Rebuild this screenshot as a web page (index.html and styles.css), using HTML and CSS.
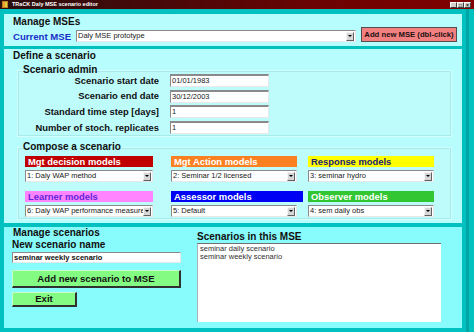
FILE: index.html
```html
<!DOCTYPE html>
<html>
<head>
<meta charset="utf-8">
<link rel="stylesheet" href="styles.css">
</head>
<body>
<div class="window">
  <div class="titlebar">
    <span class="app-icon"></span>
    <span class="title">TRaCK Daly MSE scenario editor</span>
    <div class="controls">
      <span class="ctl">_</span><span class="ctl">□</span><span class="ctl">×</span>
    </div>
  </div>
  <div class="frame">
    <section class="panel mses">
      <h2 class="ptitle">Manage MSEs</h2>
      <div class="mse-row">
        <span class="current-label">Current MSE</span>
        <div class="combo mse-combo"><span class="combo-text">Daly MSE prototype</span><span class="arrow"></span></div>
        <div class="btn-add-mse">Add new MSE (dbl-click)</div>
      </div>
    </section>
    <section class="panel define">
      <h2 class="ptitle">Define a scenario</h2>
      <fieldset class="group admin">
        <legend>Scenario admin</legend>
        <div class="admin-grid">
          <span class="flabel">Scenario start date</span><div class="field">01/01/1983</div>
          <span class="flabel">Scenario end date</span><div class="field">30/12/2003</div>
          <span class="flabel">Standard time step [days]</span><div class="field">1</div>
          <span class="flabel">Number of stoch. replicates</span><div class="field">1</div>
        </div>
      </fieldset>
      <fieldset class="group compose">
        <legend>Compose a scenario</legend>
        <div class="models">
          <div class="model c1"><div class="mhead red">Mgt decision models</div><div class="combo"><span class="combo-text">1: Daly WAP method</span><span class="arrow"></span></div></div>
          <div class="model c2"><div class="mhead orange">Mgt Action models</div><div class="combo"><span class="combo-text">2: Seminar 1/2 licensed</span><span class="arrow"></span></div></div>
          <div class="model c3"><div class="mhead yellow">Response models</div><div class="combo"><span class="combo-text">3: seminar hydro</span><span class="arrow"></span></div></div>
          <div class="model c1"><div class="mhead pink">Learner models</div><div class="combo"><span class="combo-text">6: Daly WAP performance measure</span><span class="arrow"></span></div></div>
          <div class="model c2"><div class="mhead blue">Assessor models</div><div class="combo"><span class="combo-text">5: Default</span><span class="arrow"></span></div></div>
          <div class="model c3"><div class="mhead green">Observer models</div><div class="combo"><span class="combo-text">4: sem daily obs</span><span class="arrow"></span></div></div>
        </div>
      </fieldset>
    </section>
    <section class="panel scen">
      <div class="scen-left">
        <h2 class="ptitle ms-title">Manage scenarios</h2>
        <div class="ptitle">New scenario name</div>
        <div class="field name-field">seminar weekly scenario</div>
        <div class="gbtn add-btn">Add new scenario to MSE</div>
        <div class="gbtn exit-btn">Exit</div>
      </div>
      <div class="scen-right">
        <div class="ptitle">Scenarios in this MSE</div>
        <div class="listbox">
          <div class="item">seminar daily scenario</div>
          <div class="item">seminar weekly scenario</div>
        </div>
      </div>
    </section>
  </div>
</div>
</body>
</html>
```

FILE: styles.css
```css
* { box-sizing: border-box; }
body {
  margin: 0;
  font-family: "Liberation Sans", Arial, sans-serif;
  color: #101010;
}
.window {
  width: 474px;
  height: 332px;
  display: flex;
  flex-direction: column;
  overflow: hidden;
  background: #00c0c0;
}
.titlebar {
  height: 9px;
  flex: none;
  display: flex;
  align-items: center;
  background: linear-gradient(90deg, #2a0e0e 0%, #4a0808 35%, #6e0202 70%, #800000 100%);
  color: #fff;
}
.app-icon {
  width: 6px;
  height: 7px;
  margin-left: 2px;
  background: linear-gradient(90deg, #f0a030 50%, #d8d040 50%);
  border: 1px solid #c08020;
}
.title {
  margin-left: 4px;
  font-size: 5.5px;
  font-weight: bold;
  line-height: 9px;
  white-space: nowrap;
}
.controls {
  margin-left: auto;
  margin-right: 3px;
  display: flex;
}
.ctl {
  width: 7px;
  height: 6px;
  background: #d4d0c8;
  border: 1px solid;
  border-color: #fff #404040 #404040 #fff;
  color: #000;
  font-size: 5px;
  line-height: 4px;
  text-align: center;
  font-weight: bold;
}
.frame {
  flex: 1;
  display: flex;
  flex-direction: column;
  padding: 5px 12px 4px 4px;
  background: linear-gradient(90deg, #00c0c0 466px, #00a6a6 466px, #00a6a6 469px, #00c0c0 469px);
}
.panel {
  background: #b8fdfd;
}
.ptitle {
  margin: 0;
  font-size: 10px;
  font-weight: bold;
  line-height: 12px;
  color: #101010;
  white-space: nowrap;
}
/* Panel 1 */
.mses {
  height: 32px;
  padding: 2px 0 0 9px;
}
.mse-row {
  margin-top: -1px;
  height: 15px;
  display: flex;
  align-items: flex-end;
}
.current-label {
  width: 63px;
  font-size: 9.6px;
  font-weight: bold;
  line-height: 11px;
  color: #1a2ec8;
  white-space: nowrap;
}
.combo {
  height: 12px;
  background: #fff;
  border: 1px solid;
  border-color: #8a8a8a #e8e8e8 #e8e8e8 #8a8a8a;
  display: flex;
  align-items: center;
  overflow: hidden;
}
.combo-text {
  flex: 1;
  min-width: 0;
  font-size: 7.5px;
  line-height: 10px;
  padding-left: 1px;
  white-space: nowrap;
  overflow: hidden;
  color: #202020;
}
.arrow {
  flex: none;
  width: 8px;
  height: 9px;
  margin-right: 1px;
  background: #d6d6d6;
  border: 1px solid;
  border-color: #f4f4f4 #606060 #606060 #f4f4f4;
  display: flex;
  align-items: center;
  justify-content: center;
}
.arrow::after {
  content: "";
  border-left: 2px solid transparent;
  border-right: 2px solid transparent;
  border-top: 2px solid #000;
}
.mse-combo {
  width: 280px;
}
.btn-add-mse {
  margin-left: 5px;
  width: 96px;
  height: 15px;
  background: #f28080;
  border: 1px solid;
  border-color: #ffd0d0 #303030 #303030 #ffd0d0;
  outline: 1px solid #505050;
  outline-offset: -1px;
  font-size: 7.7px;
  font-weight: bold;
  line-height: 13px;
  text-align: center;
  white-space: nowrap;
  color: #201010;
}
/* Panel 2 */
.define {
  margin-top: 3px;
  height: 174px;
  padding: 1px 10px 3px 9px;
}
.group {
  margin: 0 0 0 4px;
  border: 1px solid #d4ffff;
  box-shadow: inset 0 0 0 1px #a6eaea;
  background: #befcfc;
  min-width: 0;
}
.group legend {
  padding: 0;
  font-size: 10px;
  font-weight: bold;
  line-height: 12px;
  color: #101010;
  white-space: nowrap;
}
.admin {
  margin-top: 2px;
  padding: 0 0 2px 5px;
}
.admin-grid {
  margin-top: -2px;
  display: grid;
  grid-template-columns: 136px 99px;
  grid-auto-rows: 13px;
  column-gap: 11px;
  row-gap: 2.7px;
  align-items: center;
}
.flabel {
  text-align: right;
  font-size: 9.4px;
  font-weight: bold;
  line-height: 12px;
  white-space: nowrap;
}
.field {
  height: 13px;
  background: #fff;
  border: 1px solid;
  border-top-width: 2px;
  border-color: #8a8a8a #e8e8e8 #e8e8e8 #8a8a8a;
  font-size: 7.5px;
  line-height: 10px;
  padding-left: 1px;
  color: #202020;
  white-space: nowrap;
}
.compose {
  margin-top: 4px;
  padding: 3px 0 2px 5px;
}
.models {
  margin-left: 2px;
  display: grid;
  grid-template-columns: 128px 144px 137px;
  row-gap: 9px;
}
.model .combo {
  margin-top: 3px;
  width: 100%;
}
.c2 { padding-left: 18px; }
.c3 { padding-left: 11px; }
.mhead {
  height: 11px;
  font-size: 9.4px;
  font-weight: bold;
  line-height: 11px;
  padding-left: 3px;
  color: #fff;
  white-space: nowrap;
  overflow: hidden;
}
.red { background: #c00000; }
.orange { background: #fb8022; }
.yellow { background: #ffff00; color: #20207a; }
.pink { background: #ff84ff; color: #6424d8; }
.blue { background: #0000f4; margin-right: -6px; }
.green { background: #33c633; }
/* Panel 3 */
.scen {
  margin-top: 4px;
  height: 101px;
  background: #88fcfc;
  display: flex;
}
.scen-left {
  width: 177px;
  padding-left: 8px;
}
.ms-title { margin-left: 1px; }
.name-field {
  margin-top: 1px;
  height: 11px;
  border-top-width: 1px;
  font-weight: bold;
  line-height: 9px;
  color: #101010;
}
.gbtn {
  background: #84fc84;
  border: 1px solid;
  border-color: #c8ffc8 #303030 #303030 #c8ffc8;
  border-right-width: 2px;
  border-bottom-width: 2px;
  font-size: 9.6px;
  font-weight: bold;
  text-align: center;
  white-space: nowrap;
  color: #101010;
}
.add-btn {
  margin-top: 7px;
  height: 18px;
  line-height: 15px;
}
.exit-btn {
  margin-top: 4px;
  width: 65px;
  height: 15px;
  line-height: 12px;
}
.scen-right {
  margin-left: 16px;
  padding-top: 4px;
  width: 244px;
}
.listbox {
  height: 79px;
  background: #fff;
  border-top: 1px solid #707070;
  border-left: 1px solid #b0b0b0;
  padding: 1px 2px;
}
.item {
  font-size: 7.5px;
  line-height: 8px;
  color: #303030;
  white-space: nowrap;
}
```
